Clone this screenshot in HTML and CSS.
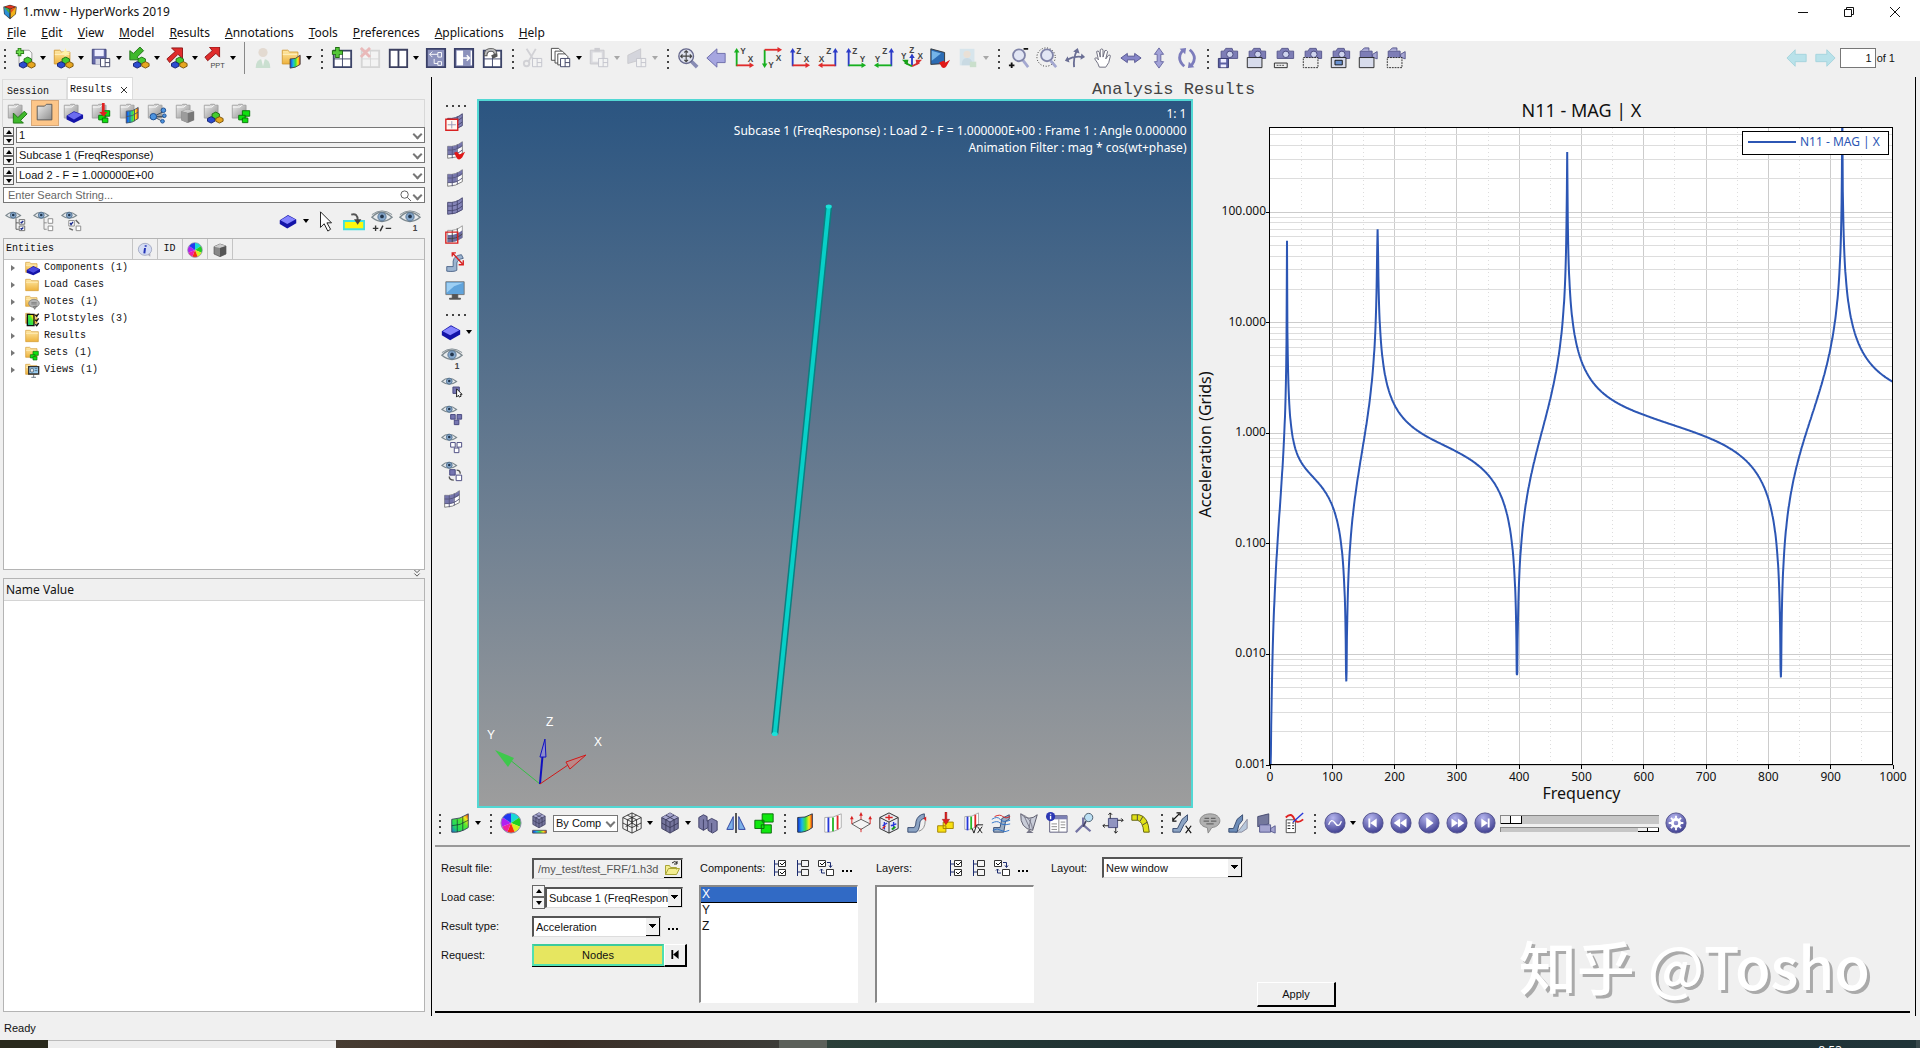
FILE: index.html
```html
<!DOCTYPE html>
<html lang="en">
<head>
<meta charset="utf-8">
<title>1.mvw - HyperWorks 2019</title>
<link rel="stylesheet" href="styles.css">
</head>
<body>
<svg class="sprite" aria-hidden="true">
  <defs>
    <linearGradient id="gGrey" x1="0" y1="0" x2="1" y2="1"><stop offset="0" stop-color="#eee"/><stop offset="1" stop-color="#8d8d8d"/></linearGradient>
    <linearGradient id="gFold" x1="0" y1="0" x2="0" y2="1"><stop offset="0" stop-color="#ffe9a6"/><stop offset="1" stop-color="#eeb23c"/></linearGradient>
    <linearGradient id="gRain" x1="0" y1="0" x2="1" y2="0"><stop offset="0" stop-color="#1530e0"/><stop offset=".3" stop-color="#18b8e8"/><stop offset=".55" stop-color="#3fe03c"/><stop offset=".78" stop-color="#ffe81c"/><stop offset="1" stop-color="#f03010"/></linearGradient>
    <linearGradient id="gMesh" x1="0" y1="1" x2="1" y2="0"><stop offset="0" stop-color="#1870e0"/><stop offset=".25" stop-color="#20d860"/><stop offset=".6" stop-color="#50e830"/><stop offset=".8" stop-color="#f8e81c"/><stop offset="1" stop-color="#f02010"/></linearGradient>
    <radialGradient id="gBall" cx=".4" cy=".25" r=".8"><stop offset="0" stop-color="#b4b4ee"/><stop offset="1" stop-color="#3a3a8c"/></radialGradient>
  </defs>
  <g id="blocks" stroke-width="1"><path d="M11 13l4-2 4 2v4l-4 2-4-2z" fill="#46cc30" stroke="#1b6a12"/><path d="M6 18l4-2 4 2v3l-4 2-4-2z" fill="#2c4cd0" stroke="#10206e"/><path d="M15 18l4-2 4 2v3l-4 2-4-2z" fill="#e6a620" stroke="#7a5208"/></g>
  <g id="pane"><path d="M11.500 12.500h10v9h-10z" fill="#fff" stroke="#3c4060"/><path d="M16.500 12.500v9M16.500 17h5" stroke="#3c4060"/></g>
  <g id="greyfold"><path d="M2.500 17.500v-14h6l1-1h4l1 1h3v14z" fill="url(#gGrey)" stroke="#a0a0a0"/><path d="M3 5.500h8l2-2" stroke="#fff" fill="none"/></g>
  <g id="yellowfold"><path d="M2.500 18.500v-15h6l2 2h9v13z" fill="url(#gFold)" stroke="#d29a35"/><path d="M3 8h16" stroke="#fff3c8"/></g>
  <g id="greens" fill="#10e010" stroke="#087008"><path d="M13.500 9.500h8v6h-8z"/><path d="M9.500 14.500h7v5h-7z"/><path d="M13.500 17.500h6v5h-6z"/></g>
  <g id="camera"><path d="M4.500 4.500h3l2-3h7l1 3h5v8h-18z" fill="#7d7db6" stroke="#54548a"/><circle cx="14" cy="8" r="3.500" fill="#cfd4ee" stroke="#45457a"/></g>
  <g id="video"><path d="M3.500 4.500h13v9h-13z" fill="#7d7db6" stroke="#54548a"/><path d="M17 8l5-3v8l-5-2zM5 4l3-3h5v3" fill="#a6a6d4" stroke="#54548a"/></g>
  <g id="eye"><path d="M1 8q10-11 22 0q-11 9-22 0z" fill="#e8ebee" stroke="#7e8a90" stroke-width="1.500"/><circle cx="12" cy="7.500" r="4.500" fill="#86a8cc" stroke="#53718e"/><circle cx="12" cy="7" r="2" fill="#23364c"/><path d="M1 5q11-8 22 0" stroke="#7e8a90" fill="none"/></g>
  <g id="smalleye"><path d="M1 6q7-7 16 0q-8 6-16 0z" fill="#e8ebee" stroke="#7e8a90" stroke-width="1.200"/><circle cx="9" cy="5.700" r="3.200" fill="#86a8cc" stroke="#53718e"/><circle cx="9" cy="5.500" r="1.400" fill="#23364c"/></g>
  <g id="meshgrid"><path d="M4 8q9 1 16-5v13q-7 5-16 5z" fill="#8484b8" stroke="#46466e"/><path d="M9 8v13M14.500 6v13M4 12q9 1 16-5M4 17q9 1 16-5" stroke="#46466e" fill="none"/></g>
  <g id="meshopen"><path d="M4 8q9 1 16-5v13q-7 5-16 5z" fill="#fff" stroke="#777"/><path d="M4 8q9 1 16-5v5q-3 3-6 3v5q-5 2-10 1z" fill="#7676ac"/><path d="M9 8v13M14.500 6v13M4 12q9 1 16-5M4 17q9 1 16-5" stroke="#55557c" fill="none"/></g>

  <symbol id="logo" viewBox="0 0 24 24"><path d="M2 4l10-3 10 3-1 11-9 8-9-8z" fill="#333"/><path d="M3 5l8 3v13l-7-6z" fill="#2a8fd8"/><path d="M21 5l-8 3v13l7-6z" fill="#f2b21a"/><path d="M4 4l8-2 8 2-8 3z" fill="#e2341c"/><path d="M3 5l8 3v6z" fill="#4cae38"/><path d="M21 5l-8 3v6z" fill="#e8561c"/></symbol>
  <symbol id="i-new" viewBox="0 0 24 24"><path d="M5.500 3.500h11l3 3v14h-14z" fill="#fbfbfb" stroke="#999"/><path d="M6 1v9M2 5.500h9" stroke="#2c7d1c" stroke-width="4"/><path d="M6 2v7M3 5.500h7" stroke="#6ee04c" stroke-width="2"/><use href="#blocks"/></symbol>
  <symbol id="i-open" viewBox="0 0 24 24"><use href="#yellowfold"/><path d="M15 1l1 4 4 1-4 2-1 4-2-4-4-1 4-2z" fill="#fff2a8"/><use href="#blocks"/></symbol>
  <symbol id="i-save" viewBox="0 0 24 24"><path d="M2.500 2.500h15v16h-15z" fill="#6468a8" stroke="#3b3f78"/><path d="M5 3h10v7H5z" fill="#eef"/><path d="M6 13h8v6H6z" fill="#d4d6e4"/><use href="#pane"/></symbol>
  <symbol id="i-import" viewBox="0 0 24 24"><path d="M2 4v10h11l-3-3 7-7-4-4-7 7z" fill="#3fb82c" stroke="#1f7314"/><use href="#blocks"/></symbol>
  <symbol id="i-export" viewBox="0 0 24 24"><path d="M18 1H6l4 4-9 8 3 4 9-9 5 4z" fill="#e02c2c" stroke="#8c1414"/><use href="#blocks"/></symbol>
  <symbol id="i-ppt" viewBox="0 0 24 24"><path d="M17 0H6l3 4-8 7 3 4 9-8 4 4z" fill="#e02c2c" stroke="#8c1414"/></symbol>
  <symbol id="i-user" viewBox="0 0 24 24"><circle cx="12" cy="6" r="5" fill="#c09a78"/><path d="M4 23q0-10 8-10t8 10z" fill="#5cae74"/><path d="M10 13l2 8 2-8z" fill="#fff"/></symbol>
  <symbol id="i-foldres" viewBox="0 0 24 24"><use href="#yellowfold"/><path d="M11 13q6 1 11-4v10q-5 4-11 4z" fill="url(#gRain)" stroke="#444"/></symbol>
  <symbol id="i-addpage" viewBox="0 0 24 24"><path d="M3 4h19v18H3z" fill="#fff" stroke="#3c4468" stroke-width="2"/><path d="M12.500 4v18M3 13h19" stroke="#3c4468"/><path d="M7 0v12M1 6h12" stroke="#1f6e12" stroke-width="5"/><path d="M7 1v10M2 6h10" stroke="#54c838" stroke-width="3"/></symbol>
  <symbol id="i-delpage" viewBox="0 0 24 24"><path d="M3 4h19v18H3z" fill="#fff" stroke="#888" stroke-width="2"/><path d="M12.500 4v18M3 13h19" stroke="#888"/><path d="M2 1l10 10M12 1L2 11" stroke="#d81818" stroke-width="3"/></symbol>
  <symbol id="i-layout" viewBox="0 0 24 24"><path d="M3 3h19v19H3z" fill="#fff" stroke="#3c4060" stroke-width="2"/><path d="M12.500 3v19" stroke="#3c4060" stroke-width="2"/></symbol>
  <symbol id="i-swap" viewBox="0 0 24 24"><path d="M2 2h20v20H2z" fill="#8c92bc" stroke="#3a4068" stroke-width="2"/><path d="M5 8h9v-2h4v5h-4V8M8 5L5 8l3 3M14 16h4v4h-4zM10 13v5h4" stroke="#fff" fill="none"/></symbol>
  <symbol id="i-expand" viewBox="0 0 24 24"><path d="M2 2h20v20H2z" fill="#8c92bc" stroke="#3a4068" stroke-width="2"/><path d="M4 4h7v16H4z" fill="#fff"/><path d="M11 12h7M15 9l3 3-3 3M20 4v16" stroke="#fff" fill="none" stroke-width="1.500"/></symbol>
  <symbol id="i-sync" viewBox="0 0 24 24"><path d="M3 4h19v18H3z" fill="#fff" stroke="#3c4468" stroke-width="2"/><path d="M12.500 9v13M3 13h19" stroke="#3c4468"/><path d="M5 10q0-7 6-7 5 0 5 6l-4 2" fill="none" stroke="#555" stroke-width="4"/><path d="M5 9q0-6 6-6 4 0 5 4" fill="none" stroke="#bbb" stroke-width="2"/></symbol>
  <symbol id="i-cut" viewBox="0 0 24 24"><path d="M5 2l9 14M15 2L7 16" stroke="#778" stroke-width="2"/><circle cx="5" cy="18" r="3" fill="none" stroke="#778" stroke-width="2"/><use href="#pane"/></symbol>
  <symbol id="i-copy" viewBox="0 0 24 24"><g fill="#fff" stroke="#444"><path d="M1.500 1.500h8l3 3v10h-11z"/><path d="M5.500 4.500h8l3 3v10h-11z"/><path d="M8.500 7.500h8l3 3v9h-11z"/></g><use href="#pane"/></symbol>
  <symbol id="i-paste" viewBox="0 0 24 24"><path d="M2.500 3.500h15v15h-15z" fill="#99a" stroke="#556"/><path d="M5 6h10v10H5z" fill="#fff"/><path d="M7 1h6v4H7z" fill="#667"/><use href="#pane"/></symbol>
  <symbol id="i-overlay" viewBox="0 0 24 24"><path d="M2 9l14-7v12L2 18z" fill="#8488a4" stroke="#556"/><use href="#pane"/></symbol>
  <symbol id="i-fit" viewBox="0 0 24 24"><path d="M15 15l7 7" stroke="#888cb4" stroke-width="4"/><circle cx="10" cy="10" r="8" fill="#dfe2ee" stroke="#66688c" stroke-width="1.500"/><path d="M10 4v12M4 10h12M8 6l2-2 2 2M8 14l2 2 2-2M6 8l-2 2 2 2M14 8l2 2-2 2" stroke="#444" fill="none" stroke-width="1.200"/></symbol>
  <symbol id="i-back" viewBox="0 0 24 24"><path d="M2 12L13 2v5h9v10h-9v5z" fill="#a6a6e0" stroke="#6a6aa8"/></symbol>
  <symbol id="ax-ul" viewBox="0 0 24 24"><path d="M4 21V4" class="av" stroke-width="2"/><path d="M1 6l3-5 3 5z" class="avf"/><path d="M4 20h15" class="ah" stroke-width="2"/><path d="M18 17l5 3-5 3z" class="ahf"/></symbol>
  <symbol id="ax-ur" viewBox="0 0 24 24"><path d="M20 21V4" class="av" stroke-width="2"/><path d="M17 6l3-5 3 5z" class="avf"/><path d="M20 20H5" class="ah" stroke-width="2"/><path d="M6 17l-5 3 5 3z" class="ahf"/></symbol>
  <symbol id="ax-dr" viewBox="0 0 24 24"><path d="M4 3v17" class="av" stroke-width="2"/><path d="M1 18l3 5 3-5z" class="avf"/><path d="M4 3h15" class="ah" stroke-width="2"/><path d="M18 0l5 3-5 3z" class="ahf"/></symbol>
  <symbol id="i-iso" viewBox="0 0 24 24"><path d="M12 20V10" stroke="#2a3cc8" stroke-width="2"/><path d="M12 21l8-4" stroke="#d83030" stroke-width="2"/><path d="M12 21l-8-4" stroke="#18a018" stroke-width="2"/><path d="M9 12l3-5 3 5z" fill="#2a3cc8"/><path d="M17 20l6-6h-7z" fill="#d83030"/><path d="M7 20l-6-6h7z" fill="#18a018"/></symbol>
  <symbol id="i-screen" viewBox="0 0 24 24"><path d="M2 2l15 4v12L2 19z" fill="#2c6cb4" stroke="#333"/><path d="M3 4l10 3L3 15z" fill="#74b4e8"/><path d="M11 17l3 5q3 2 5-1l4-7-5 3-2-2z" fill="#e01818"/></symbol>
  <symbol id="i-usershot" viewBox="0 0 24 24"><path d="M3 2h16v18H3z" fill="#8fc8e4"/><circle cx="11" cy="8" r="4" fill="#d8b48c"/><path d="M5 20q0-8 6-8t6 8z" fill="#5a9ac0"/><path d="M14 16h7v6h-7z" fill="#5cae64"/></symbol>
  <symbol id="i-zoom" viewBox="0 0 24 24"><path d="M16 14l6 8" stroke="#a4a8d0" stroke-width="3"/><circle cx="12" cy="9" r="6.500" fill="#e2e6f4" stroke="#8084a8" stroke-width="2"/><path d="M17 2h5M1 20h6M4 17v6" stroke="#111" stroke-width="2"/></symbol>
  <symbol id="i-zoombox" viewBox="0 0 24 24"><circle cx="11" cy="11" r="10" fill="none" stroke="#111" stroke-dasharray="1 2"/><path d="M16 15l6 7" stroke="#a4a8d0" stroke-width="3"/><circle cx="12" cy="9" r="6.500" fill="#e2e6f4" stroke="#8084a8" stroke-width="2"/></symbol>
  <symbol id="i-rotate" viewBox="0 0 24 24"><path d="M3 14q9-5 18-3M14 4q-4 8-3 18" fill="none" stroke="#6a6e94" stroke-width="2"/><path d="M10 5l5-4 2 6zM19 7l4 4-5 3zM4 10l-3 5 5 2z" fill="#6a6e94"/></symbol>
  <symbol id="i-hand" viewBox="0 0 24 24"><path d="M8 22q-1-4-5-9 1-3 4 1L5 5q2-2 3 1l1 5V3q2-2 3 0v8l2-7q2-1 3 1l-2 8 3-4q2-1 2 1-1 8-5 12z" fill="#fff" stroke="#667"/></symbol>
  <symbol id="i-lr" viewBox="0 0 24 24"><path d="M1 12l7-5v3h8V7l7 5-7 5v-3H8v3z" fill="#8686c8" stroke="#52528e"/></symbol>
  <symbol id="i-ud" viewBox="0 0 24 24"><path d="M12 1l5 7h-3v8h3l-5 7-5-7h3V8H7z" fill="#a2a2d8" stroke="#6666a0"/></symbol>
  <symbol id="i-spin" viewBox="0 0 24 24"><path d="M9 21Q0 13 7 4M15 3q9 8 2 17" fill="none" stroke="#7c7cbc" stroke-width="3"/><path d="M4 2l7-1-1 7zM20 22l-7 1 1-7z" fill="#7c7cbc"/></symbol>
  <symbol id="i-cam1" viewBox="0 0 24 24"><use href="#camera"/><path d="M1.500 12.500h11v10h-11z" fill="#5c60a4" stroke="#33366c"/><path d="M4 13h6v4H4zM4 19h6v3H4z" fill="#eef"/></symbol>
  <symbol id="i-cam2" viewBox="0 0 24 24"><use href="#camera"/><path d="M2.500 11.500h16v11h-16z" fill="#d8dcec" stroke="#222"/></symbol>
  <symbol id="i-cam3" viewBox="0 0 24 24"><use href="#camera"/><path d="M1.500 17.500h14v5h-14z" fill="#eee" stroke="#222"/><path d="M4 20h9" stroke="#444" stroke-dasharray="2 1"/></symbol>
  <symbol id="i-cam4" viewBox="0 0 24 24"><use href="#camera"/><path d="M2.500 11.500h16v11h-16z" fill="#eee" stroke="#222" stroke-dasharray="2 1"/></symbol>
  <symbol id="i-cam5" viewBox="0 0 24 24"><use href="#camera"/><path d="M2.500 11.500h16v11h-16z" fill="#d8dcec" stroke="#222"/><path d="M6.500 14.500h8v5h-8z" fill="#6890d0" stroke="#111"/></symbol>
  <symbol id="i-vid1" viewBox="0 0 24 24"><use href="#video"/><path d="M2.500 11.500h16v11h-16z" fill="#d8dcec" stroke="#222"/></symbol>
  <symbol id="i-vid2" viewBox="0 0 24 24"><use href="#video"/><path d="M2.500 11.500h16v11h-16z" fill="#eee" stroke="#222" stroke-dasharray="2 1"/></symbol>
  <symbol id="i-prev" viewBox="0 0 24 24"><path d="M1 12l9-9v5h12v8H10v5z" fill="#b9e2ea" stroke="#a4d3dc"/></symbol>
  <symbol id="i-next" viewBox="0 0 24 24"><path d="M23 12l-9-9v5H2v8h12v5z" fill="#b9e2ea" stroke="#a4d3dc"/></symbol>

  <symbol id="i-f1" viewBox="0 0 24 24"><use href="#greyfold"/><path d="M8 12v11h11l-3-3 7-7-3-3-7 7z" fill="#3fb82c" stroke="#1f7314"/></symbol>
  <symbol id="i-f2" viewBox="0 0 24 24"><path d="M3.500 19.500v-15h8l2-2h6v17z" fill="url(#gGrey)" stroke="#555"/></symbol>
  <symbol id="i-block" viewBox="0 0 24 24"><path d="M1 11l11-7 11 6v5l-12 7-10-6z" fill="#1414a8"/><path d="M2 11l10-6 10 5-11 6z" fill="#8484ff"/></symbol>
  <symbol id="i-f3" viewBox="0 0 24 24"><use href="#greyfold"/><path d="M5 15l8-5 10 4v4l-10 5-8-4z" fill="#1414a8"/><path d="M6 15l7-4 9 3-9 5z" fill="#6c6cf0"/></symbol>
  <symbol id="i-f4" viewBox="0 0 24 24"><use href="#greyfold"/><use href="#greens"/><path d="M13 1h3v10h3l-4 5-5-5h3z" fill="#e02020"/></symbol>
  <symbol id="i-f5" viewBox="0 0 24 24"><use href="#greyfold"/><path d="M9 10q7 1 13-4v12q-6 5-13 5z" fill="url(#gRain)" stroke="#456"/><path d="M13 10v13M18 8v13M9 16q7 0 13-5" stroke="#456" fill="none"/></symbol>
  <symbol id="i-f6" viewBox="0 0 24 24"><use href="#greyfold"/><path d="M8 16l12-6M8 16h13M8 16l10 5" stroke="#345"/><g fill="#4c94e0" stroke="#1c4c8c"><circle cx="8" cy="16" r="3.500"/><circle cx="19" cy="9" r="2.500"/><circle cx="20" cy="15" r="2"/><circle cx="18" cy="21" r="2"/></g></symbol>
  <symbol id="i-f7" viewBox="0 0 24 24"><use href="#greyfold"/><path d="M8 10l7-2 7 2v10l-7 3-7-3z" fill="#777"/><path d="M8 10l7-2 7 2-7 2z" fill="#ccc"/><path d="M8 10l7 2v11l-7-3z" fill="#9c9c9c"/></symbol>
  <symbol id="i-f8" viewBox="0 0 24 24"><use href="#greyfold"/><use href="#blocks"/></symbol>
  <symbol id="i-f9" viewBox="0 0 24 24"><use href="#greyfold"/><use href="#greens"/></symbol>
  <symbol id="i-eyeall" viewBox="0 0 24 24"><use href="#smalleye"/><path d="M12 9v12h3M12 14h3" stroke="#555" fill="none"/><path d="M15.500 10.500h6v5h-6zM15.500 17.500h6v5h-6z" fill="#fff" stroke="#666"/><path d="M17 13l1 1 2-2M17 20l1 1 2-2" stroke="#1c2c8c" fill="none" stroke-width="1.500"/></symbol>
  <symbol id="i-eyenone" viewBox="0 0 24 24"><use href="#smalleye"/><path d="M12 9v12h3M12 14h3" stroke="#888" fill="none"/><path d="M16.500 9.500h5v5h-5zM16.500 17.500h5v5h-5z" fill="#fff" stroke="#888"/></symbol>
  <symbol id="i-eyerev" viewBox="0 0 24 24"><use href="#smalleye"/><path d="M8.500 11.500h6v6h-6z" fill="#fff" stroke="#888"/><path d="M10 14l1 2 2-3" stroke="#1c2c8c" fill="none" stroke-width="1.500"/><path d="M16.500 17.500h5v5h-5z" fill="#fff" stroke="#888"/><path d="M16 11l4 4M9 20l4 2" stroke="#666" stroke-width="1.500"/></symbol>
  <symbol id="i-cursor" viewBox="0 0 24 24"><path d="M6 2v17l4-4 4 8 3-2-4-7h5z" fill="#fff" stroke="#111"/></symbol>
  <symbol id="i-note" viewBox="0 0 24 24"><path d="M1 12h22v9H1z" fill="#fcf80c" stroke="#40e0e0" stroke-width="2"/><path d="M9 5q7-2 7 6" fill="none" stroke="#555" stroke-width="2"/><path d="M12 10h8l-4 6z" fill="#444"/></symbol>
  <symbol id="i-eyepm" viewBox="0 0 24 24"><use href="#eye"/><path d="M2 20h6M5 17v6M10 23l3-6M16 20h6" stroke="#333" stroke-width="1.500"/></symbol>
  <symbol id="i-eye1" viewBox="0 0 24 24"><use href="#eye"/></symbol>
  <symbol id="i-info" viewBox="0 0 24 24"><ellipse cx="12" cy="11" rx="10" ry="9" fill="#d4dcf4" stroke="#8c94b0"/><path d="M16 19l4 3v-5z" fill="#aab"/><path d="M13 5v2M12 9l-1 8" stroke="#2434b8" stroke-width="3"/></symbol>
  <symbol id="i-wheel" viewBox="0 0 24 24"><path d="M12 12V1a11 11 0 0 1 9 5z" fill="#18d8d8"/><path d="M12 12l9-6a11 11 0 0 1 1 10z" fill="#20d020"/><path d="M12 12l10 4a11 11 0 0 1-6 6z" fill="#d8f020"/><path d="M12 12l4 10a11 11 0 0 1-8 0z" fill="#f82c10"/><path d="M12 12L8 22a11 11 0 0 1-6-6z" fill="#f020a0"/><path d="M12 12L2 16A11 11 0 0 1 3 6z" fill="#b020f0"/><path d="M12 12L3 6a11 11 0 0 1 9-5z" fill="#2038f0"/><circle cx="12" cy="12" r="11" fill="none" stroke="#8888a8"/></symbol>
  <symbol id="i-cube" viewBox="0 0 24 24"><path d="M3 7l9-4 9 3v12l-9 4-9-4z" fill="#888" stroke="#555"/><path d="M3 7l9-4 9 3-9 3z" fill="#ccc"/><path d="M12 9l9-3v12l-9 4z" fill="#555"/></symbol>
  <symbol id="t-comp" viewBox="0 0 24 24"><use href="#yellowfold"/><path d="M4 15l10-6 10 5v4l-10 5-10-4z" fill="#1414a8"/><path d="M5 15l9-5 9 4-9 5z" fill="#4a4ae0"/></symbol>
  <symbol id="t-fold" viewBox="0 0 24 24"><path d="M2.500 20.500v-17h7l2 2h10v15z" fill="url(#gFold)" stroke="#d29a35"/><path d="M3 8h18" stroke="#fff3c8"/></symbol>
  <symbol id="t-note" viewBox="0 0 24 24"><use href="#yellowfold"/><ellipse cx="15" cy="14" rx="8" ry="6" fill="#b4b4b4" stroke="#777"/><path d="M14 19l2 4 3-5zM11 13h8M11 15h8" fill="#999" stroke="#666"/></symbol>
  <symbol id="t-plot" viewBox="0 0 24 24"><use href="#yellowfold"/><path d="M5 5h10v17H5z" fill="url(#gMesh)" stroke="#111" stroke-width="2"/><path d="M17 6l2 2 3-4M17 13l2 2 3-4M17 20l2 2 3-4" stroke="#111" fill="none" stroke-width="2"/></symbol>
  <symbol id="t-set" viewBox="0 0 24 24"><use href="#yellowfold"/><use href="#greens"/></symbol>
  <symbol id="t-view" viewBox="0 0 24 24"><use href="#yellowfold"/><path d="M7 7h15v11H7z" fill="#9cd0f4" stroke="#333" stroke-width="2"/><path d="M10 10h4v5h-4zM16 10h4M16 13h4M14.500 18v5M11 23h7" fill="#fff" stroke="#345"/></symbol>

  <symbol id="v-mask" viewBox="0 0 24 24"><use href="#meshgrid"/><path d="M2 9h13v12H2z" fill="#fff8f0" stroke="#d82020" stroke-width="1.500"/><path d="M8.500 11v8M4 15h9" stroke="#9898b8"/></symbol>
  <symbol id="v-undo" viewBox="0 0 24 24"><use href="#meshopen"/><path d="M11 15l3 6q3 3 6-1l3-6-6 3-3-3z" fill="#e01818"/></symbol>
  <symbol id="v-part" viewBox="0 0 24 24"><use href="#meshopen"/></symbol>
  <symbol id="v-full" viewBox="0 0 24 24"><use href="#meshgrid"/></symbol>
  <symbol id="v-unmask" viewBox="0 0 24 24"><path d="M4 8q9 1 16-5v13q-7 5-16 5z" fill="#fff" stroke="#999"/><path d="M4 13q9 1 16-5v8q-7 5-16 5z" fill="#6c6ca0"/><path d="M9 8v13M14.500 6v13M4 17q9 1 16-5" stroke="#444" fill="none"/><path d="M2 10h13v12H2z" fill="none" stroke="#d82020" stroke-width="1.500"/></symbol>
  <symbol id="v-bend" viewBox="0 0 24 24"><path d="M3 17h7V11q1-6 9-7l2 4q-6 1-7 5v8q-3 2-11 1z" fill="#9cb4d0" stroke="#4c6488"/><path d="M10 3l10 11M9 6V2h4M21 10v5h-5" stroke="#d82020" fill="none" stroke-width="1.500"/></symbol>
  <symbol id="v-mon" viewBox="0 0 24 24"><path d="M2 3h20v14H2z" fill="#60a4dc" stroke="#777"/><path d="M3 4h18l-10 4-8 7z" fill="#9ccff4"/><path d="M9 17h6v4H9zM6 21h12v1H6z" fill="#555" stroke="#555"/></symbol>
  <symbol id="v-pick" viewBox="0 0 24 24"><use href="#smalleye"/><path d="M13 12h7v7h-7z" fill="#7676b0" stroke="#44447c"/><path d="M17 14v9l2-2 1 2 2-1-1-2h2z" fill="#fff" stroke="#111"/></symbol>
  <symbol id="v-three" viewBox="0 0 24 24"><use href="#smalleye"/><path d="M10.500 11.500h5v5h-5zM17.500 11.500h5v5h-5zM14.500 17.500h5v5h-5z" fill="#7676b0" stroke="#44447c"/></symbol>
  <symbol id="v-threeo" viewBox="0 0 24 24"><use href="#smalleye"/><path d="M10.500 11.500h5v5h-5zM17.500 11.500h5v5h-5zM14.500 17.500h5v5h-5z" fill="#fff" stroke="#44447c"/></symbol>
  <symbol id="v-rev" viewBox="0 0 24 24"><use href="#smalleye"/><path d="M9.500 10.500h6v6h-6z" fill="#7676b0" stroke="#44447c"/><path d="M16.500 16.500h6v6h-6z" fill="#fff" stroke="#44447c"/><path d="M17 11q4 0 4 4M9 18q0 4 5 4" fill="none" stroke="#555" stroke-width="1.500"/></symbol>

  <symbol id="b-contour" viewBox="0 0 24 24"><path d="M3 8q9 0 18-6v15q-9 6-18 5z" fill="url(#gMesh)" stroke="#345"/><path d="M9 8v14M15 5v15M3 15q9 0 18-6" stroke="#123" fill="none" stroke-width=".7"/></symbol>
  <symbol id="b-cubebase" viewBox="0 0 24 24"><path d="M12 1l9 5v12l-9 5-9-5V6z" fill="#74749c" stroke="#3c3c5c"/><path d="M12 1l9 5-9 5-9-5z" fill="#a4a4cc"/><path d="M3 6l9 5 9-5M12 11v12M3 12l9 5 9-5M7.500 3.500l9 5v12M16.500 3.500l-9 5v12" stroke="#3c3c5c" fill="none"/></symbol>
  <symbol id="b-cubecol" viewBox="0 0 24 24"><use href="#b-cubebase" x="3" y="0" width="18" height="18"/><path d="M5 20h15v3H5z" fill="url(#gRain)" stroke="#555"/></symbol>
  <symbol id="b-wire" viewBox="0 0 24 24"><path d="M12 1l10 5v12l-10 5-10-5V6zM2 6l10 5 10-5M12 11v12M2 12l10 5 10-5M7 3.500l10 5v12M17 3.500l-10 5v12M12 1v10M5 16l7-4 7 4M12 5v8" stroke="#222" fill="#f4f4f4" stroke-width=".9"/></symbol>
  <symbol id="b-join" viewBox="0 0 24 24"><path d="M2 6l5-3 4 2v5l5-3 6 3v10l-5 3-5-3v-3l-5 3-5-3z" fill="#7c7ca8" stroke="#3c3c64"/><path d="M7 8v12M16 12v10M12 9v8" stroke="#3c3c64"/></symbol>
  <symbol id="b-mirror" viewBox="0 0 24 24"><path d="M12 1v22" stroke="#111" stroke-width="1.500"/><path d="M9 5v14H2zM15 5v14h7z" fill="#7cb0e8" stroke="#283c9c"/></symbol>
  <symbol id="b-greens" viewBox="0 0 24 24"><path d="M10 2h12v9H10zM2 9h10v9H2zM9 14h11v9H9z" fill="#10e810" stroke="#0a6a0a"/></symbol>
  <symbol id="b-rain" viewBox="0 0 24 24"><path d="M4 6q8 1 16-4v15q-8 6-16 5z" fill="url(#gRain)" stroke="#234"/></symbol>
  <symbol id="b-iso" viewBox="0 0 24 24"><path d="M3 6q9 1 18-4v15q-9 6-18 5z" fill="#fff" stroke="#aaa"/><path d="M7 6v16" stroke="#2838d8" stroke-width="2"/><path d="M12 6v15" stroke="#28b828" stroke-width="2"/><path d="M17 4v15" stroke="#e02828" stroke-width="2"/></symbol>
  <symbol id="b-vec" viewBox="0 0 24 24"><path d="M2 13l10-5 10 5-10 6z" fill="#f4f4f4" stroke="#555"/><path d="M2 13V7M12 8V3M22 13V7M12 22v-4" stroke="#d82020"/><path d="M0 8l2-4 2 4zM10 4l2-4 2 4zM20 8l2-4 2 4z" fill="#d82020"/></symbol>
  <symbol id="b-tensor" viewBox="0 0 24 24"><path d="M12 1l10 5v12l-10 5-10-5V6zM2 6l10 5 10-5M12 11v12" stroke="#222" fill="#e8e8f0"/><path d="M7 11v8M5 15l5-3M17 11v8M14 15l6-2" stroke="#2838d8" stroke-width="1.500"/><path d="M12 3v6M8 6h8M5 18l3-3" stroke="#d82020" stroke-width="1.500"/><path d="M15 19l4-3" stroke="#18a018" stroke-width="2"/></symbol>
  <symbol id="b-deform" viewBox="0 0 24 24"><path d="M2 17h7q2-2 2-7 2-7 9-8v5q-5 1-5 6-1 8-4 9H2z" fill="#8ca4c4" stroke="#34486c"/><path d="M14 21q7-2 7-12" fill="none" stroke="#888"/><path d="M19 7l3-2v5z" fill="#d82020"/></symbol>
  <symbol id="b-load" viewBox="0 0 24 24"><path d="M10 11h11v7H10zM4 15h9v7H4z" fill="#f8e010" stroke="#a08000"/><path d="M12 0h2v8h3l-4 6-4-6h3z" fill="#e02020" stroke="#901010" stroke-width=".5"/></symbol>
  <symbol id="b-derived" viewBox="0 0 24 24"><path d="M3 5q8 1 15-4v13q-7 6-15 5z" fill="#fff" stroke="#aaa"/><path d="M6 5v15" stroke="#2838d8" stroke-width="2"/><path d="M10 5v14" stroke="#28b828" stroke-width="2"/><path d="M14.500 3v14" stroke="#e02828" stroke-width="2"/><path d="M11 18l2 5 3-9h7M17 16l5 7M22 16l-5 7" stroke="#111" fill="none"/></symbol>
  <symbol id="b-stream" viewBox="0 0 24 24"><path d="M4 17h7l2-10 8-4v5l-4 2-2 12H4z" fill="#98acc4" stroke="#34486c"/><path d="M2 8q6-4 9 0t11 1M2 12q6-3 9 0t11 1M3 20q5-3 9 0t9 0" stroke="#2870c8" fill="none"/><path d="M5 5q6-3 9 0t8 0" stroke="#d82020" fill="none"/></symbol>
  <symbol id="b-dish" viewBox="0 0 24 24"><path d="M3 2q-1 16 13 18L21 3q-9 8-18-1z" fill="#c8ccd8" stroke="#556"/><path d="M3 2q12 4 13 18M7 5l6 13M14 7l-2 11" fill="none" stroke="#778"/><path d="M12 19l-3 4h8z" fill="#778"/></symbol>
  <symbol id="b-table" viewBox="0 0 24 24"><path d="M4 4h19v18H4z" fill="#fff" stroke="#555577"/><path d="M4 4h19v4H4z" fill="#7c80b4"/><path d="M14 8v14M6 13h6M6 16h6M6 19h6M16 11h5M16 14h5M16 17h5" stroke="#888"/><circle cx="5" cy="5" r="5" fill="#2c38b4"/><path d="M5 2v1M5 4v4" stroke="#fff" stroke-width="1.500"/></symbol>
  <symbol id="b-query" viewBox="0 0 24 24"><path d="M2 22l8-8V6M10 14l8 7" fill="none" stroke="#7474a4" stroke-width="2.500"/><path d="M13 10l-3 6" stroke="#446" stroke-width="2"/><circle cx="16" cy="6" r="4.500" fill="#bce0f4" stroke="#456"/></symbol>
  <symbol id="b-move" viewBox="0 0 24 24"><path d="M7 7h10v10H7z" fill="#9094c0" stroke="#44487c"/><path d="M9 7V1M15 17v6M7 15H1M17 9h6M7 3l2-2 2 2M13 21l2 2 2-2M3 13l-2 2 2 2M21 7l2 2-2 2" fill="none" stroke="#111"/></symbol>
  <symbol id="b-tube" viewBox="0 0 24 24"><path d="M2 3h8q10 2 11 19h-6Q14 10 8 9H2z" fill="#e0e018" stroke="#5c5c08"/><path d="M8 3v6M14 5l-3 5M19 11l-5 3" stroke="#444"/></symbol>
  <symbol id="b-defx" viewBox="0 0 24 24"><path d="M2 18h5l5-10 6-5v6l-4 5-4 8H2z" fill="#8ca4c4" stroke="#34486c"/><path d="M2 9L9 2M2 6v4h4M6 1h4v3M16 15l6 8M22 15l-6 8" stroke="#111" fill="none" stroke-width="1.300"/></symbol>
  <symbol id="b-speech" viewBox="0 0 24 24"><path d="M12 2c14 0 14 14 2 15l-4 6-1-6C-3 15-1 2 12 2z" fill="#b0b0b0" stroke="#888"/><path d="M6 7h5M13 7h5M5 10h6M13 10h6M8 13h8" stroke="#666" stroke-width="1.500"/></symbol>
  <symbol id="b-trace" viewBox="0 0 24 24"><path d="M9 20h4l9-12v10l-6 4H9z" fill="#b8c8dc" stroke="#889"/><path d="M2 18h5l4-10 6-5v6l-4 5-2 8H2z" fill="#6c8cb8" stroke="#34486c"/></symbol>
  <symbol id="b-vidwin" viewBox="0 0 24 24"><path d="M3 5l12-3v11L3 16z" fill="#74789c" stroke="#44486c"/><path d="M5 14h12v8H5zM17 18l5-3v8l-5-2z" fill="#a4a4d0" stroke="#54588c"/></symbol>
  <symbol id="b-report" viewBox="0 0 24 24"><path d="M3.500 8.500h10v14h-10z" fill="#fff" stroke="#444"/><path d="M5 12h3M5 15h3M5 18h3M10 12h2M10 15h2M10 18h2" stroke="#111"/><path d="M3 6q6-6 9 1t10 1" stroke="#e02020" fill="none" stroke-width="2"/><path d="M11 11L22 1" stroke="#2838d8" stroke-width="1.500"/></symbol>
  <symbol id="ball" viewBox="0 0 24 24"><circle cx="12" cy="12" r="11" fill="url(#gBall)" stroke="#50508c"/></symbol>
  <symbol id="p-wave" viewBox="0 0 24 24"><use href="#ball"/><path d="M5 14q3-8 7-2t7-2" stroke="#fff" fill="none" stroke-width="1.500"/></symbol>
  <symbol id="p-first" viewBox="0 0 24 24"><use href="#ball"/><path d="M7 7h2v10H7zM16 7v10l-7-5z" fill="#fff"/></symbol>
  <symbol id="p-rew" viewBox="0 0 24 24"><use href="#ball"/><path d="M11 7v10l-7-5zM18 7v10l-7-5z" fill="#fff"/></symbol>
  <symbol id="p-play" viewBox="0 0 24 24"><use href="#ball"/><path d="M9 6l8 6-8 6z" fill="#fff"/></symbol>
  <symbol id="p-fwd" viewBox="0 0 24 24"><use href="#ball"/><path d="M6 7v10l7-5zM13 7v10l7-5z" fill="#fff"/></symbol>
  <symbol id="p-last" viewBox="0 0 24 24"><use href="#ball"/><path d="M15 7h2v10h-2zM8 7v10l7-5z" fill="#fff"/></symbol>
  <symbol id="p-gear" viewBox="0 0 24 24"><use href="#ball"/><circle cx="12" cy="12" r="4" fill="none" stroke="#fff" stroke-width="3"/><path d="M12 4v3M12 17v3M4 12h3M17 12h3M6.500 6.500l2 2M15.500 15.500l2 2M17.500 6.500l-2 2M8.500 15.500l-2 2" stroke="#fff" stroke-width="2"/></symbol>

  <symbol id="s-all" viewBox="0 0 16 16"><path d="M2.500 0v16M2.500 4h4M2.500 12h4" stroke="#1c2c70" fill="none"/><path d="M6.500 .5h7v6h-7zM6.500 9.500h7v6h-7z" fill="#fff" stroke="#333"/><path d="M8 3l2 2 3-3M8 12l2 2 3-3" stroke="#111" fill="none"/></symbol>
  <symbol id="s-none" viewBox="0 0 16 16"><path d="M2.500 0v16M2.500 4h4M2.500 12h4" stroke="#1c2c70" fill="none"/><path d="M6.500 .5h7v6h-7zM6.500 9.500h7v6h-7z" fill="#f4f4f4" stroke="#333"/></symbol>
  <symbol id="s-flip" viewBox="0 0 16 16"><path d="M.5 .5h7v6h-7zM8.500 9.500h7v6h-7z" fill="#fff" stroke="#333"/><path d="M2 3l2 2 3-3" stroke="#111" fill="none"/><path d="M9 2.500h3.500V7M11 5.500l1.500 2 1.500-2M3.500 9v4H7M2 10.500L3.500 9 5 10.500" stroke="#1c2c70" fill="none"/></symbol>
  <symbol id="s-open" viewBox="0 0 16 16"><path d="M1.500 14.500v-9h4l1 2h6v2M1.500 14.500l3-6h11l-3 6z" fill="#f4ee90" stroke="#a8a438"/><path d="M8 3q3-3 5 0M13 1v3h-3" fill="none" stroke="#222"/></symbol>
</svg>

<header class="titlebar">
  <svg class="logo"><use href="#logo"/></svg>
  <span class="caption">1.mvw - HyperWorks 2019</span>
  <button class="winbtn" aria-label="Minimize"><svg viewBox="0 0 12 12"><path d="M1 6.500h10"/></svg></button>
  <button class="winbtn" aria-label="Restore"><svg viewBox="0 0 12 12"><path d="M1.500 3.500h7v7h-7zM3.500 3.500v-2h7v7h-2"/></svg></button>
  <button class="winbtn" aria-label="Close"><svg viewBox="0 0 12 12"><path d="M1 1l10 10M11 1L1 11"/></svg></button>
</header>
<nav class="menubar">
  <a href="#"><u>F</u>ile</a><a href="#"><u>E</u>dit</a><a href="#"><u>V</u>iew</a><a href="#"><u>M</u>odel</a><a href="#"><u>R</u>esults</a><a href="#"><u>A</u>nnotations</a><a href="#"><u>T</u>ools</a><a href="#"><u>P</u>references</a><a href="#"><u>A</u>pplications</a><a href="#"><u>H</u>elp</a>
</nav>

<div class="toolbar main-tools">
  <i class="grip"></i>
  <button class="tool" aria-label="New session"><svg><use href="#i-new"/></svg></button><button class="drop" aria-label="New options"></button>
  <button class="tool" aria-label="Open session"><svg><use href="#i-open"/></svg></button><button class="drop" aria-label="Open options"></button>
  <button class="tool" aria-label="Save"><svg><use href="#i-save"/></svg></button><button class="drop" aria-label="Save options"></button>
  <button class="tool" aria-label="Import"><svg><use href="#i-import"/></svg></button><button class="drop" aria-label="Import options"></button>
  <button class="tool" aria-label="Export"><svg><use href="#i-export"/></svg></button><button class="drop" aria-label="Export options"></button>
  <button class="tool" aria-label="Publish to PPT"><svg viewBox="0 0 24 24"><use href="#i-ppt"/><text x="7" y="23" class="glyph">PPT</text></svg></button><button class="drop" aria-label="Publish options"></button>
  <i class="rule"></i>
  <button class="tool" disabled aria-label="User profile"><svg><use href="#i-user"/></svg></button>
  <button class="tool" aria-label="Load results"><svg><use href="#i-foldres"/></svg></button><button class="drop" aria-label="Load options"></button>
  <i class="grip"></i>
  <button class="tool" aria-label="Add page"><svg><use href="#i-addpage"/></svg></button>
  <button class="tool" disabled aria-label="Delete page"><svg><use href="#i-delpage"/></svg></button>
  <button class="tool" aria-label="Page layout"><svg><use href="#i-layout"/></svg></button><button class="drop" aria-label="Layout options"></button>
  <button class="tool" aria-label="Swap windows"><svg><use href="#i-swap"/></svg></button>
  <button class="tool" aria-label="Expand window"><svg><use href="#i-expand"/></svg></button>
  <button class="tool" aria-label="Synchronize windows"><svg><use href="#i-sync"/></svg></button>
  <i class="grip"></i>
  <button class="tool" disabled aria-label="Cut"><svg><use href="#i-cut"/></svg></button>
  <button class="tool" aria-label="Copy"><svg><use href="#i-copy"/></svg></button><button class="drop" aria-label="Copy options"></button>
  <button class="tool" disabled aria-label="Paste"><svg><use href="#i-paste"/></svg></button><button class="drop" disabled aria-label="Paste options"></button>
  <button class="tool" disabled aria-label="Overlay"><svg><use href="#i-overlay"/></svg></button><button class="drop" disabled aria-label="Overlay options"></button>
  <i class="grip"></i>
  <button class="tool" aria-label="Fit"><svg><use href="#i-fit"/></svg></button>
  <button class="tool" aria-label="Previous view"><svg><use href="#i-back"/></svg></button>
  <button class="tool" aria-label="XY top view"><svg class="v-g h-r" viewBox="0 0 24 24"><use href="#ax-ul"/><text x="8" y="8" class="glyph b">Y</text><text x="16" y="16" class="glyph b">X</text></svg></button>
  <button class="tool" aria-label="XY bottom view"><svg class="v-g h-r" viewBox="0 0 24 24"><use href="#ax-dr"/><text x="16" y="15" class="glyph b">X</text><text x="8" y="23" class="glyph b">Y</text></svg></button>
  <button class="tool" aria-label="XZ left view"><svg class="v-b h-r" viewBox="0 0 24 24"><use href="#ax-ul"/><text x="8" y="8" class="glyph b">Z</text><text x="16" y="16" class="glyph b">X</text></svg></button>
  <button class="tool" aria-label="XZ right view"><svg class="v-b h-r" viewBox="0 0 24 24"><use href="#ax-ur"/><text x="10" y="8" class="glyph b">Z</text><text x="2" y="16" class="glyph b">X</text></svg></button>
  <button class="tool" aria-label="YZ front view"><svg class="v-b h-g" viewBox="0 0 24 24"><use href="#ax-ul"/><text x="8" y="8" class="glyph b">Z</text><text x="16" y="16" class="glyph b">Y</text></svg></button>
  <button class="tool" aria-label="YZ rear view"><svg class="v-b h-g" viewBox="0 0 24 24"><use href="#ax-ur"/><text x="10" y="8" class="glyph b">Z</text><text x="2" y="16" class="glyph b">Y</text></svg></button>
  <button class="tool" aria-label="Isometric view"><svg viewBox="0 0 24 24"><use href="#i-iso"/><text x="0" y="13" class="glyph b">Y</text><text x="9" y="7" class="glyph b">Z</text><text x="18" y="13" class="glyph b">X</text></svg></button>
  <button class="tool" aria-label="Reverse view"><svg><use href="#i-screen"/></svg></button>
  <button class="tool" disabled aria-label="User views"><svg><use href="#i-usershot"/></svg></button><button class="drop" disabled aria-label="View options"></button>
  <i class="grip"></i>
  <button class="tool" aria-label="Zoom in or out"><svg><use href="#i-zoom"/></svg></button>
  <button class="tool" aria-label="Circle zoom"><svg><use href="#i-zoombox"/></svg></button>
  <button class="tool" aria-label="Rotate"><svg><use href="#i-rotate"/></svg></button>
  <button class="tool" aria-label="Pan"><svg><use href="#i-hand"/></svg></button>
  <button class="tool" aria-label="Rotate left or right"><svg><use href="#i-lr"/></svg></button>
  <button class="tool" aria-label="Rotate up or down"><svg><use href="#i-ud"/></svg></button>
  <button class="tool" aria-label="Spin"><svg><use href="#i-spin"/></svg></button>
  <i class="grip"></i>
  <button class="tool" aria-label="Save image"><svg><use href="#i-cam1"/></svg></button>
  <button class="tool" aria-label="Capture window"><svg><use href="#i-cam2"/></svg></button>
  <button class="tool" aria-label="Capture panel"><svg><use href="#i-cam3"/></svg></button>
  <button class="tool" aria-label="Capture area"><svg><use href="#i-cam4"/></svg></button>
  <button class="tool" aria-label="Capture page"><svg><use href="#i-cam5"/></svg></button>
  <button class="tool" aria-label="Record window"><svg><use href="#i-vid1"/></svg></button>
  <button class="tool" aria-label="Record area"><svg><use href="#i-vid2"/></svg></button>
  <span class="pager">
    <button class="tool" aria-label="Previous page"><svg><use href="#i-prev"/></svg></button>
    <button class="tool" aria-label="Next page"><svg><use href="#i-next"/></svg></button>
    <input id="page" value="1"><label for="page">of 1</label>
  </span>
</div>

<main class="workspace">
  <aside class="sidebar">
    <div class="tabs"><button class="tab">Session</button><button class="tab active">Results<svg viewBox="0 0 8 8"><path d="M1 1l6 6M7 1L1 7"/></svg></button></div>
    <div class="toolbar browser-tools">
      <button class="tool" aria-label="Load"><svg><use href="#i-f1"/></svg></button>
      <button class="tool on" aria-label="Results view"><svg><use href="#i-f2"/></svg></button>
      <button class="tool" aria-label="Component view"><svg><use href="#i-f3"/></svg></button>
      <button class="tool" aria-label="Load case view"><svg><use href="#i-f4"/></svg></button>
      <button class="tool" aria-label="Contour view"><svg><use href="#i-f5"/></svg></button>
      <button class="tool" aria-label="Vector view"><svg><use href="#i-f6"/></svg></button>
      <button class="tool" aria-label="Section view"><svg><use href="#i-f7"/></svg></button>
      <button class="tool" aria-label="Assembly view"><svg><use href="#i-f8"/></svg></button>
      <button class="tool" aria-label="Set view"><svg><use href="#i-f9"/></svg></button>
    </div>
    <div class="pickers">
      <div class="pick"><span class="spin"><button aria-label="Previous model"></button><button aria-label="Next model"></button></span><span class="combo"><select aria-label="Model"><option>1</option></select></span></div>
      <div class="pick"><span class="spin"><button aria-label="Previous subcase"></button><button aria-label="Next subcase"></button></span><span class="combo"><select aria-label="Subcase"><option>Subcase 1 (FreqResponse)</option></select></span></div>
      <div class="pick"><span class="spin"><button aria-label="Previous simulation"></button><button aria-label="Next simulation"></button></span><span class="combo"><select aria-label="Simulation"><option>Load 2 - F = 1.000000E+00</option></select></span></div>
      <div class="search combo"><input placeholder="Enter Search String..." aria-label="Search"><svg viewBox="0 0 12 12"><circle cx="5" cy="5" r="4"/><path d="M8 8l4 4"/></svg></div>
    </div>
    <div class="toolbar eye-tools">
      <button class="tool" aria-label="Show all"><svg><use href="#i-eyeall"/></svg></button>
      <button class="tool" aria-label="Show none"><svg><use href="#i-eyenone"/></svg></button>
      <button class="tool" aria-label="Reverse shown"><svg><use href="#i-eyerev"/></svg></button>
      <span class="push"></span>
      <button class="tool short" aria-label="Entity type"><svg><use href="#i-block"/></svg></button><button class="drop" aria-label="Entity options"></button>
      <button class="tool" aria-label="Select"><svg><use href="#i-cursor"/></svg></button>
      <button class="tool" aria-label="Add to panel"><svg><use href="#i-note"/></svg></button>
      <button class="tool" aria-label="Show or hide"><svg><use href="#i-eyepm"/></svg></button>
      <button class="tool" aria-label="Isolate"><svg viewBox="0 0 24 24"><use href="#i-eye1"/><text x="15" y="23" class="glyph b">1</text></svg></button>
    </div>
    <div class="tree">
      <table>
        <colgroup><col class="c-name"><col class="c-ico"><col class="c-ico"><col class="c-ico"><col class="c-ico"><col></colgroup>
        <thead><tr><th>Entities</th><th class="ic"><svg><use href="#i-info"/></svg></th><th class="ic">ID</th><th class="ic"><svg><use href="#i-wheel"/></svg></th><th class="ic"><svg><use href="#i-cube"/></svg></th><th></th></tr></thead>
        <tbody>
          <tr><td colspan="6"><span><svg><use href="#t-comp"/></svg>Components (1)</span></td></tr>
          <tr><td colspan="6"><span><svg><use href="#t-fold"/></svg>Load Cases</span></td></tr>
          <tr><td colspan="6"><span><svg><use href="#t-note"/></svg>Notes (1)</span></td></tr>
          <tr><td colspan="6"><span><svg><use href="#t-plot"/></svg>Plotstyles (3)</span></td></tr>
          <tr><td colspan="6"><span><svg><use href="#t-fold"/></svg>Results</span></td></tr>
          <tr><td colspan="6"><span><svg><use href="#t-set"/></svg>Sets (1)</span></td></tr>
          <tr><td colspan="6"><span><svg><use href="#t-view"/></svg>Views (1)</span></td></tr>
        </tbody>
      </table>
    </div>
    <div class="sash"><svg viewBox="0 0 8 8"><path d="M1 0l3 3 3-3M1 4l3 3 3-3"/></svg></div>
    <div class="props"><div class="props-head">Name Value</div></div>
  </aside>

  <section class="content">
    <h1 class="page-title">Analysis Results</h1>
    <div class="stage">
      <div class="side-tools">
        <i class="grip flat"></i>
        <button class="tool" aria-label="Mask"><svg><use href="#v-mask"/></svg></button>
        <button class="tool" aria-label="Reverse mask"><svg><use href="#v-undo"/></svg></button>
        <button class="tool" aria-label="Unmask adjacent"><svg><use href="#v-part"/></svg></button>
        <button class="tool" aria-label="Unmask all"><svg><use href="#v-full"/></svg></button>
        <button class="tool" aria-label="Unmask shown"><svg><use href="#v-unmask"/></svg></button>
        <button class="tool" aria-label="Spherical clip"><svg><use href="#v-bend"/></svg></button>
        <button class="tool" aria-label="Display"><svg><use href="#v-mon"/></svg></button>
        <i class="grip flat second"></i>
        <span class="split"><button class="tool" aria-label="Entity"><svg><use href="#i-block"/></svg></button><button class="drop" aria-label="Entity list"></button></span>
        <button class="tool left" aria-label="Isolate entity"><svg viewBox="0 0 24 24"><use href="#i-eye1"/><text x="15" y="23" class="glyph b">1</text></svg></button>
        <button class="tool left" aria-label="Pick entity"><svg><use href="#v-pick"/></svg></button>
        <button class="tool left" aria-label="Show entities"><svg><use href="#v-three"/></svg></button>
        <button class="tool left" aria-label="Hide entities"><svg><use href="#v-threeo"/></svg></button>
        <button class="tool left" aria-label="Reverse entities"><svg><use href="#v-rev"/></svg></button>
        <button class="tool left" aria-label="Unmask entities"><svg><use href="#v-part"/></svg></button>
      </div>
      <div class="view3d">
        <p class="note">1: 1<br>Subcase 1 (FreqResponse) : Load 2 - F = 1.000000E+00 : Frame 1 : Angle 0.000000<br>Animation Filter : mag * cos(wt+phase)</p>
        <svg class="model" viewBox="0 0 712 704" preserveAspectRatio="xMinYMax meet">
          <path d="M350 104L296 632" stroke="#0b7f80" stroke-width="7"/><path d="M350 104L296 632" stroke="#08d0c8" stroke-width="4"/>
          <ellipse cx="350" cy="104" rx="3" ry="2" fill="#1ce0d8"/><ellipse cx="296" cy="632" rx="3" ry="2" fill="#1ce0d8"/>
          <path d="M61 682L30 657" stroke="#34c044"/><path d="M16 648l19 8-6 9z" fill="#3ec84c"/>
          <path d="M61 682l3-33" stroke="#1010c0" stroke-width="2"/><path d="M66 637l-5 18h6z" fill="#8c8ccc" stroke="#1010c0"/>
          <path d="M61 682l28-19" stroke="#d01818"/><path d="M107 653l-20 7 4 7z" fill="#b88" stroke="#d01818"/>
          <text x="8" y="637">Y</text><text x="67" y="624">Z</text><text x="115" y="644">X</text>
        </svg>
      </div>
      <div class="plot"><svg id="chart" role="img" aria-label="N11 - MAG | X against frequency"></svg></div>
    </div>
    <div class="toolbar result-tools">
      <i class="grip"></i>
      <button class="tool" aria-label="Contour panel"><svg><use href="#b-contour"/></svg></button><button class="drop" aria-label="Contour options"></button>
      <i class="grip"></i>
      <button class="tool" aria-label="Colour"><svg><use href="#i-wheel"/></svg></button>
      <button class="tool" aria-label="Colour mode"><svg><use href="#b-cubecol"/></svg></button>
      <span class="combo mode"><select aria-label="Colour by"><option>By Comp</option></select></span>
      <button class="tool" aria-label="Wireframe"><svg><use href="#b-wire"/></svg></button><button class="drop" aria-label="Wireframe options"></button>
      <button class="tool" aria-label="Shaded"><svg><use href="#b-cubebase"/></svg></button><button class="drop" aria-label="Shaded options"></button>
      <button class="tool" aria-label="Section cut"><svg><use href="#b-join"/></svg></button>
      <button class="tool" aria-label="Symmetry"><svg><use href="#b-mirror"/></svg></button>
      <button class="tool" aria-label="Sets"><svg><use href="#b-greens"/></svg></button>
      <i class="grip"></i>
      <button class="tool" aria-label="Contour"><svg><use href="#b-rain"/></svg></button>
      <button class="tool" aria-label="Iso"><svg><use href="#b-iso"/></svg></button>
      <button class="tool" aria-label="Vector"><svg><use href="#b-vec"/></svg></button>
      <button class="tool" aria-label="Tensor"><svg><use href="#b-tensor"/></svg></button>
      <button class="tool" aria-label="Deformed"><svg><use href="#b-deform"/></svg></button>
      <button class="tool" aria-label="Free body"><svg><use href="#b-load"/></svg></button>
      <button class="tool" aria-label="Derived results"><svg><use href="#b-derived"/></svg></button>
      <button class="tool" aria-label="Streamlines"><svg><use href="#b-stream"/></svg></button>
      <button class="tool" aria-label="Radar"><svg><use href="#b-dish"/></svg></button>
      <button class="tool" aria-label="Query"><svg><use href="#b-table"/></svg></button>
      <button class="tool" aria-label="Measure"><svg><use href="#b-query"/></svg></button>
      <button class="tool" aria-label="Exploded view"><svg><use href="#b-move"/></svg></button>
      <button class="tool" aria-label="Tracking"><svg><use href="#b-tube"/></svg></button>
      <i class="grip"></i>
      <button class="tool" aria-label="Measures"><svg><use href="#b-defx"/></svg></button>
      <button class="tool" aria-label="Notes"><svg><use href="#b-speech"/></svg></button>
      <button class="tool" aria-label="Tracing"><svg><use href="#b-trace"/></svg></button>
      <button class="tool" aria-label="Video overlay"><svg><use href="#b-vidwin"/></svg></button>
      <button class="tool" aria-label="Build plots"><svg><use href="#b-report"/></svg></button>
      <i class="grip"></i>
      <button class="tool" aria-label="Animation mode"><svg><use href="#p-wave"/></svg></button><button class="drop" aria-label="Animation options"></button>
      <button class="tool" aria-label="First frame"><svg><use href="#p-first"/></svg></button>
      <button class="tool" aria-label="Previous frame"><svg><use href="#p-rew"/></svg></button>
      <button class="tool" aria-label="Play"><svg><use href="#p-play"/></svg></button>
      <button class="tool" aria-label="Next frame"><svg><use href="#p-fwd"/></svg></button>
      <button class="tool" aria-label="Last frame"><svg><use href="#p-last"/></svg></button>
      <span class="sliders"><input type="range" value="0" aria-label="Frame"><input class="thin" type="range" value="100" aria-label="Speed"></span>
      <button class="tool" aria-label="Animation controls"><svg><use href="#p-gear"/></svg></button>
    </div>
    <form class="panel">
      <div class="fields">
        <label for="file">Result file:</label>
        <span class="well file"><input id="file" value="/my_test/test_FRF/1.h3d" readonly><button type="button" aria-label="Browse"><svg><use href="#s-open"/></svg></button></span>
        <label for="case">Load case:</label>
        <span class="pair"><span class="spin big"><button type="button" aria-label="Previous case"></button><button type="button" aria-label="Next case"></button></span><span class="well sel"><select id="case"><option>Subcase 1 (FreqRespon</option></select></span></span>
        <label for="type">Result type:</label>
        <span class="pair"><span class="well sel type"><select id="type"><option>Acceleration</option></select></span><button type="button" class="dots" aria-label="More types"></button></span>
        <label for="nodes">Request:</label>
        <span class="pair"><button type="button" id="nodes" class="nodes">Nodes</button><button type="button" class="raised rewind" aria-label="Reset nodes"><svg viewBox="0 0 8 10"><path d="M0 0h2v10H0zM8 0v10L2 5z"/></svg></button></span>
      </div>
      <div class="listcol">
        <div class="listhead"><label for="comps">Components:</label>
          <button type="button" class="mini" aria-label="Select all components"><svg><use href="#s-all"/></svg></button><button type="button" class="mini" aria-label="Clear components"><svg><use href="#s-none"/></svg></button><button type="button" class="mini" aria-label="Flip components"><svg><use href="#s-flip"/></svg></button><button type="button" class="dots" aria-label="Filter components"></button></div>
        <select id="comps" class="list" size="7"><option selected>X</option><option>Y</option><option>Z</option></select>
      </div>
      <div class="listcol">
        <div class="listhead"><label for="layers">Layers:</label>
          <button type="button" class="mini" aria-label="Select all layers"><svg><use href="#s-all"/></svg></button><button type="button" class="mini" aria-label="Clear layers"><svg><use href="#s-none"/></svg></button><button type="button" class="mini" aria-label="Flip layers"><svg><use href="#s-flip"/></svg></button><button type="button" class="dots" aria-label="Filter layers"></button></div>
        <select id="layers" class="list" size="7"></select>
      </div>
      <div class="finish">
        <div class="pair"><label for="layout">Layout:</label><span class="well sel layout"><select id="layout"><option>New window</option></select></span></div>
        <button type="button" class="raised apply">Apply</button>
      </div>
      <div class="watermark">知乎 @Tosho</div>
    </form>
  </section>
</main>
<footer class="status">Ready</footer>
<div class="taskbar"><i class="t1"></i><i class="t2"></i><i class="t3"></i><i class="t4"></i><i class="t5"><time>8:53</time></i></div>
<script src="chart.js"></script>
</body>
</html>
```
FILE: styles.css
```css
* { box-sizing: border-box; }
html, body { height: 100%; margin: 0; }
body {
  display: flex;
  flex-direction: column;
  overflow: hidden;
  background: #f0f0f0;
  color: #111;
  font: 11px/14px "Liberation Sans", Arial, sans-serif;
}
button, input, select { font: inherit; color: inherit; margin: 0; padding: 0; border: 0; border-radius: 0; background: none; outline: 0; }
select { appearance: none; }
svg { display: block; flex: none; }
.sprite { width: 0; height: 0; position: absolute; }
.glyph { font: 8px "Liberation Sans", sans-serif; fill: #444; }
.glyph.b { font-size: 9px; font-weight: 700; }

/* window frame */
.titlebar { display: flex; align-items: center; height: 23px; flex: none; background: #fff; padding: 0 2px; font: 12px/22px "Noto Sans", sans-serif; }
.logo { width: 16px; height: 18px; margin-right: 5px; }
.caption { flex: 1; }
.winbtn { width: 46px; height: 22px; display: grid; place-items: center; }
.winbtn svg { width: 12px; height: 12px; fill: none; stroke: #111; }
.menubar { display: flex; flex: none; height: 18px; background: #fff; font: 12px/20px "Noto Sans", sans-serif; }
.menubar a { color: #111; text-decoration: none; padding: 0 8px 0 7px; }

/* toolbars */
.toolbar { display: flex; align-items: center; flex: none; }
.main-tools { height: 36px; padding-bottom: 2px; }
.grip { width: 13px; height: 22px; flex: none; background: radial-gradient(circle, #444 1px, transparent 1px) 5px 0 / 4px 6px repeat-y; }
.grip:first-child { width: 11px; background-position-x: 3px; }
.grip.flat { width: 22px; height: 4px; background: radial-gradient(circle, #444 1px, transparent 1px) 0 0 / 6px 4px; }
.grip.second { margin-top: 9px; }
.rule { width: 10px; height: 32px; flex: none; background: linear-gradient(#888, #888) center / 1px 100% no-repeat; }
.tool { width: 28px; height: 26px; flex: none; display: grid; place-items: center; }
.tool svg { width: 22px; height: 22px; }
.tool:disabled { opacity: .25; }
.tool.on { background: #fdc689; outline: 1px solid #d8a878; outline-offset: -1px; }
.drop { width: 10px; height: 24px; flex: none; display: grid; place-items: center start; }
.drop::after { content: ""; border: 3px solid transparent; border-top: 4px solid #000; border-bottom: 0; margin-left: 1px; }
.drop:disabled { opacity: .3; }
.v-g { --v: #18b020; } .v-b { --v: #2c3cc8; }
.h-r { --h: #e02c2c; } .h-g { --h: #18b020; }
.av { stroke: var(--v); } .avf { fill: var(--v); }
.ah { stroke: var(--h); } .ahf { fill: var(--h); }
.pager { display: flex; align-items: center; margin-left: auto; padding-right: 25px; }
.pager input { width: 36px; height: 20px; border: 1px solid #777; background: #fff; text-align: right; padding-right: 3px; margin-left: 1px; }
.pager label { padding-left: 1px; }

/* browser pane */
.workspace { display: flex; flex: 1; min-height: 0; }
.sidebar { width: 431px; flex: none; display: flex; flex-direction: column; padding: 0 6px 4px 2px; }
.tabs { display: flex; height: 22px; flex: none; align-items: end; }
.tab { font: 10px/20px "Liberation Mono", monospace; height: 20px; width: 65px; text-align: left; padding: 2px 4px 0; border: 1px solid #ddd; border-bottom: 0; }
.tab.active { display: flex; align-items: center; height: 22px; width: 66px; padding: 3px 2px 0; background: #fff; }
.tab svg { width: 8px; height: 8px; margin-left: 8px; fill: none; stroke: #333; }
.browser-tools { height: 28px; padding-bottom: 2px; border: 1px solid #d8d8d8; border-bottom: 0; }
.pickers { display: flex; flex-direction: column; gap: 4px; padding-left: 1px; flex: none; }
.pick { display: flex; gap: 2px; height: 16px; }
.spin { display: flex; flex-direction: column; width: 11px; height: 18px; flex: none; }
.spin button { flex: 1; border: 1px solid #666; display: grid; place-items: center; background: #f4f4f4; }
.spin button::after { content: ""; border: 3px solid transparent; border-top: 0; border-bottom: 4px solid #000; }
.spin button + button::after { border-bottom: 0; border-top: 4px solid #000; }
.combo { flex: 1; display: flex; position: relative; border: 1px solid #777; background: #fff; min-width: 0; }
.combo select, .combo input { flex: 1; min-width: 0; padding-left: 2px; }
.combo::after { content: ""; position: absolute; right: 3px; top: 3px; width: 5px; height: 5px; border: solid #777; border-width: 0 2px 2px 0; transform: rotate(45deg); }
.search { height: 18px; align-items: center; padding-right: 13px; }
.search input { padding-left: 4px; }
.search input::placeholder { color: #666; opacity: 1; }
.search svg { width: 11px; height: 11px; fill: none; stroke: #555; }
.search::after { top: 4px; }
.eye-tools { height: 35px; padding-right: 1px; }
.push { flex: 1; }
.short svg { width: 18px; height: 18px; }
.tree { flex: none; height: 332px; margin-left: 1px; background: #fff; border: 1px solid #b4b4b4; font: 10px/14px "Liberation Mono", monospace; }
.tree table { width: 100%; border-collapse: collapse; table-layout: fixed; }
.c-name { width: 128px; } .c-ico { width: 25px; }
.tree th { height: 20px; padding: 0 2px; text-align: left; font-weight: 400; background: #f0f0f0; border: solid #c4c4c4; border-width: 0 1px 1px 0; }
.tree th:last-child { border-right: 0; }
.tree th.ic { text-align: center; padding: 0; }
.tree th svg { width: 16px; height: 16px; margin: 2px auto 0; }
.tree td { height: 17px; padding: 0 0 0 7px; }
.tree td span { display: flex; align-items: center; gap: 4px; }
.tree td span::before { content: ""; border: 3px solid transparent; border-left: 4px solid #777; border-right: 0; margin-right: 5px; }
.tree td svg { width: 16px; height: 16px; }
.sash { flex: none; height: 8px; padding-right: 4px; }
.sash svg { width: 8px; height: 7px; margin-left: auto; fill: none; stroke: #444; }
.props { flex: 1; margin-left: 1px; background: #fff; border: 1px solid #b4b4b4; }
.props-head { height: 22px; padding: 0 2px; background: #f0f0f0; border-bottom: 1px solid #d4d4d4; font: 12px/22px "Noto Sans", sans-serif; }

/* content */
.content { flex: 1; min-width: 0; display: flex; flex-direction: column; margin-right: 4px; border: solid #000; border-width: 0 1px; }
.page-title { margin: 0; height: 22px; font: 17px/25px "Liberation Mono", monospace; text-align: center; color: #444; }
.stage { flex: 1; min-height: 0; display: grid; grid-template-columns: 45px 716fr 723fr; }
.side-tools { display: flex; flex-direction: column; align-items: center; padding-top: 5px; }
.side-tools .tool { height: 28px; }
.side-tools .left { align-self: start; margin-left: 6px; }
.side-tools .split { align-self: start; margin: 2px 0 0 5px; display: flex; align-items: center; }
.side-tools .split .tool { height: 26px; }
.side-tools .split svg { width: 20px; height: 20px; }
.view3d { position: relative; min-width: 0; border: 2px solid #52d8d4; background: linear-gradient(#2b5581, #9d9d9d); }
.note { position: absolute; right: 4px; top: 4px; margin: 0; text-align: right; color: #fff; font: 12px/17px "Noto Sans", sans-serif; }
.model { position: absolute; inset: 0; width: 100%; height: 100%; fill: none; }
.model text { fill: #fff; font: 12px "Liberation Sans", sans-serif; }
.plot { min-width: 0; min-height: 0; }
#chart { width: 100%; height: 100%; overflow: visible; font: 12px "Noto Sans", sans-serif; fill: #111; }
#chart .title { font-size: 18px; }
#chart .axis { font-size: 16px; }
#chart .major { stroke: #ccc; }
#chart .minor { stroke: #ddd; }
#chart .dotted { stroke: #ddd; stroke-dasharray: 1 3; }
#chart .curve { fill: none; stroke: #2c56b4; stroke-width: 2; }
#chart .key { fill: #2c56b4; }
#chart .frame { fill: none; stroke: #000; }

.result-tools { height: 30px; padding-left: 1px; margin-left: 2px; }
.mode { flex: none; width: 65px; height: 17px; }
.sliders { display: flex; flex-direction: column; gap: 3px; width: 159px; margin: 0 3px 0 1px; }
.sliders input { appearance: none; display: block; width: 100%; height: 9px; background: #c6c6c6; border: solid #888; border-width: 1px 0 0 1px; }
.sliders .thin { height: 5px; }
.sliders input::-webkit-slider-thumb { appearance: none; width: 21px; height: 8px; background: linear-gradient(90deg, #f0f0f0 9px, #000 9px 10px, #fff 10px); border: solid #000; border-width: 0 1px 1px 0; }
.sliders .thin::-webkit-slider-thumb { height: 4px; }

.panel { position: relative; display: flex; height: 168px; flex: none; margin: 7px 5px 3px 3px; padding: 10px 0 0 6px; border-top: 2px solid #999; border-bottom: 2px solid #000; }
.fields { display: grid; grid-template-columns: 91px 155px; grid-auto-rows: 22px; row-gap: 7px; align-content: start; align-items: center; margin-right: 12px; }
.pair { display: flex; align-items: center; }
.well { display: flex; height: 21px; border: solid; border-width: 2px 1px 1px 2px; border-color: #555 #ddd #ddd #555; background: #fff; position: relative; }
.file { width: 151px; background: #f0f0f0; color: #555; }
.file input { flex: 1; min-width: 0; padding-left: 4px; }
.file button { width: 18px; border: solid #000; border-width: 0 1px 1px 0; }
.file svg { width: 16px; height: 16px; }
.sel { flex: 1; }
.sel select { flex: 1; padding-left: 2px; min-width: 0; }
.sel::after { content: ""; position: absolute; right: 0; top: 0; bottom: 0; width: 13px; border: solid #000; border-width: 0 1px 1px 0; background: linear-gradient(#000, #000) 3px 6px / 7px 1px no-repeat, linear-gradient(#000, #000) 4px 7px / 5px 1px no-repeat, linear-gradient(#000, #000) 5px 8px / 3px 1px no-repeat, linear-gradient(#000, #000) 6px 9px / 1px 1px no-repeat, #f0f0f0; pointer-events: none; }
.spin.big { width: 13px; height: 24px; }
.pair .spin + .sel { margin-right: 4px; }
.type { flex: none; width: 129px; margin-right: 7px; }
.dots { width: 12px; height: 12px; background: linear-gradient(90deg, #000 2px, transparent 2px) 0 8px / 4px 2px repeat-x; }
.nodes { width: 132px; height: 22px; background: #e6e660; border: 2px solid #50e0b0; border-top-color: #3ccb9c; box-shadow: 0 1px 0 #000, 1px 0 0 #000; }
.raised { background: #f0f0f0; border: solid; border-width: 1px 2px 2px 1px; border-color: #fff #000 #000 #fff; }
.rewind { width: 23px; height: 23px; display: grid; place-items: center; }
.rewind svg { width: 8px; height: 9px; }
.listcol { width: 159px; margin-right: 17px; }
.listhead { display: flex; align-items: center; height: 22px; margin-bottom: 6px; padding-right: 4px; }
.listhead label { flex: 1; padding-left: 1px; }
.mini { width: 23px; height: 16px; }
.mini svg { width: 16px; height: 16px; }
.mini + .dots { margin-left: 1px; }
.list { display: block; width: 159px; height: 118px; background: #fff; border: solid; border-width: 2px 1px 1px 2px; border-color: #888 #fff #fff #888; overflow: hidden; font: 12px/16px "Liberation Sans", sans-serif; }
.list option { height: 16px; min-height: 16px; padding: 0 1px; }
.list option:checked { background: #316ac5 linear-gradient(#316ac5, #316ac5); color: #fff; box-shadow: inset 0 -1px #000; }
.finish { display: flex; flex-direction: column; justify-content: space-between; width: 300px; padding-bottom: 4px; }
.layout { flex: none; width: 141px; margin-left: 15px; }
.apply { width: 79px; height: 25px; margin-left: 206px; }
.watermark { position: absolute; right: 40px; bottom: 16px; color: #fff; font: 500 58px/60px "Noto Sans CJK SC", sans-serif; text-shadow: 3px 3px 0 #aaa; }

.status { height: 24px; flex: none; padding: 5px 4px; }
.taskbar { height: 8px; flex: none; display: flex; overflow: hidden; }
.t1 { width: 48px; background: #29291c; }
.t2 { width: 288px; background: #eee; border-top: 1px solid #bbb; }
.t3 { width: 443px; background: linear-gradient(90deg, #473c32, #3a2e26 50%, #3c3c38); }
.t4 { width: 48px; background: #5c605a; }
.t5 { flex: 1; background: linear-gradient(90deg, #2a3f38, #1e3032 30%, #203438); text-align: right; padding: 3px 74px 0 0; border-right: 4px solid #39494c; }
.t5 time { display: block; color: #fff; font: 12px/16px "Open Sans", sans-serif; }
```
FILE: chart.js
```js
// Frequency response of a beam tip: poles, zeros and the level reached at each.
const poles = [[27.3, 55], [172.7, 70], [477, 349], [918.6, 900]];
const zeros = [[122.5, 0.0057], [396.5, 0.0065], [820, 0.0062]];
const gain = [[0, 1], [50, 1], [250, 0.935], [600, 0.925], [700, 0.895], [1000, 0.816]];

function trim(f) {
  for (let i = 1; i < gain.length; i++) {
    const [a, u] = gain[i - 1], [b, v] = gain[i];
    if (f <= b) return u + (v - u) * (f - a) / (b - a);
  }
  return gain[gain.length - 1][1];
}

function response(f) {
  let h = 5.7e-4 * f * f * trim(f);
  for (const [z, v] of zeros) {
    if (Math.abs(f - z) < 0.05) return v;
    h *= Math.abs(1 - (f / z) ** 2);
  }
  for (const [p, v] of poles) {
    if (Math.abs(f - p) < 0.05) return v;
    h /= Math.abs(1 - (f / p) ** 2);
  }
  return h;
}

function draw() {
  const svg = document.getElementById('chart');
  const W = svg.clientWidth, H = svg.clientHeight;
  const L = 77, R = W - 23, T = 29, B = H - 43;
  const logTop = 2.76;
  const x = f => L + (R - L) * f / 1000;
  const y = v => B - (B - T) * (Math.log10(v) + 3) / (logTop + 3);
  const snap = n => Math.floor(n) + 0.5;
  const line = (c, x1, y1, x2, y2) => `<line class="${c}" x1="${x1}" y1="${y1}" x2="${x2}" y2="${y2}"/>`;
  const text = (c, px, py, anchor, s) => `<text class="${c}" x="${px}" y="${py}" text-anchor="${anchor}">${s}</text>`;
  let out = `<rect x="${L}" y="${T}" width="${R - L}" height="${B - T}" fill="#fff"/>`;

  for (let f = 50; f < 1000; f += 50) {
    out += line(f % 100 ? 'dotted' : 'major', snap(x(f)), T, snap(x(f)), B);
  }
  for (let d = -3; d <= 2; d++) {
    for (let m = 1; m < 10; m++) {
      const v = m * 10 ** d;
      if (Math.log10(v) < logTop) out += line(m === 1 ? 'major' : 'minor', L, snap(y(v)), R, snap(y(v)));
    }
    out += line('frame', L - 4, snap(y(10 ** d)), L, snap(y(10 ** d)));
    out += text('', L - 4, y(10 ** d) + 3, 'end', (10 ** d).toFixed(3));
  }
  for (let f = 0; f <= 1000; f += 100) {
    out += line('frame', snap(x(f)), B, snap(x(f)), B + 4);
    out += text('', x(f), B + 16, 'middle', f);
  }

  const samples = [];
  for (let f = 1; f <= 1000; f += 0.5) samples.push([f, response(f)]);
  for (const [f, v] of [...poles, ...zeros]) samples.push([f, v]);
  samples.sort((a, b) => a[0] - b[0]);
  const dips = zeros.map(z => z[0]);
  const pts = samples
    .filter(([f]) => ![...poles, ...zeros].some(([c]) => f !== c && Math.abs(f - c) < 0.4))
    .map(([f, v]) => {
      const low = dips.some(z => Math.abs(f - z) < 6) ? 0.0057 : 0.001;
      return `${x(f).toFixed(1)},${y(Math.max(v, low)).toFixed(1)}`;
    });
  out += `<clipPath id="area"><rect x="${L - 1}" y="${T}" width="${R - L + 1}" height="${B - T}"/></clipPath>`;
  out += `<polyline class="curve" clip-path="url(#area)" points="${pts.join(' ')}"/>`;
  out += `<rect class="frame" x="${L - 0.5}" y="${T - 0.5}" width="${Math.round(R - L)}" height="${Math.round(B - T)}"/>`;

  const K = R - 151;
  out += `<rect x="${Math.round(K) + 0.5}" y="32.5" width="146" height="23" fill="#fff" stroke="#000"/>`;
  out += line('curve', K + 6, 43, K + 54, 43);
  out += text('key', K + 58, 47, 'start', 'N11 - MAG | X');

  const mid = (L + R) / 2, my = (T + B) / 2 - 2;
  out += text('title', mid, 18, 'middle', 'N11 - MAG | X');
  out += text('axis', mid, H - 9, 'middle', 'Frequency');
  out += `<text class="axis" transform="translate(18 ${my}) rotate(-90)" text-anchor="middle">Acceleration (Grids)</text>`;
  svg.innerHTML = out;
}

draw();
addEventListener('resize', draw);
```
